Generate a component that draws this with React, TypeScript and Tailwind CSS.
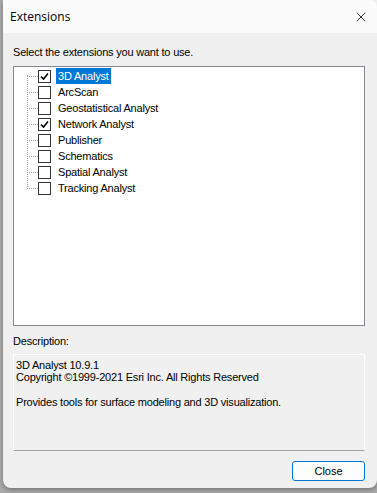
import { X } from "lucide-react"

const items = [
  { name: "3D Analyst", checked: true, selected: true },
  { name: "ArcScan", checked: false },
  { name: "Geostatistical Analyst", checked: false },
  { name: "Network Analyst", checked: true },
  { name: "Publisher", checked: false },
  { name: "Schematics", checked: false },
  { name: "Spatial Analyst", checked: false },
  { name: "Tracking Analyst", checked: false },
]

function CheckBox({ checked }: { checked: boolean }) {
  return (
    <div className="w-[13px] h-[13px] border border-[#333] bg-white flex items-center justify-center shrink-0">
      {checked && (
        <svg width="9" height="9" viewBox="0 0 9 9">
          <path d="M1 4.5 L3.5 7 L8 1.5" stroke="#000" strokeWidth="1.6" fill="none" />
        </svg>
      )}
    </div>
  )
}

export default function App() {
  return (
    <div className="w-[377px] h-[493px] bg-[#a9a9a9] pl-[3px] pb-[5px] overflow-hidden font-['Liberation_Sans',sans-serif] text-[11px] tracking-[-0.2px] text-black">
      <div className="w-[374px] h-[488px] bg-[#f0f0f0] rounded-br-[8px] rounded-bl-[8px] flex flex-col shadow-[0_2px_4px_rgba(0,0,0,0.3)]">
        {/* Title bar */}
        <div className="h-[33px] bg-[#fbfbfb] flex items-center justify-between pl-[7px] pr-[8px] rounded-tr-[8px] tracking-normal">
          <span className="font-['Open_Sans',sans-serif] text-[12px] text-black">Extensions</span>
          <X className="w-[16px] h-[16px]" strokeWidth={1.2} />
        </div>

        <div className="flex flex-col pl-[10px] pr-[12px] flex-1">
          <div className="mt-[13px] leading-[13px]">Select the extensions you want to use.</div>

          {/* List */}
          <div className="mt-[7px] h-[260px] bg-white border border-[#828790] relative pt-[1px]">
            <div className="absolute left-[13px] top-[8px] h-[114px] border-l border-dotted border-[#a0a0a0]" />
            {items.map((item) => (
              <div key={item.name} className="h-[16px] flex items-center relative">
                <div className="w-[11px] ml-[13px] border-t border-dotted border-[#a0a0a0]" />
                <CheckBox checked={item.checked} />
                <span
                  className={
                    "ml-[5px] px-[2px] leading-[16px] " +
                    (item.selected ? "bg-[#0078d7] text-white" : "")
                  }
                >
                  {item.name}
                </span>
              </div>
            ))}
          </div>

          <div className="mt-[9px] leading-[13px]">Description:</div>

          {/* Description */}
          <div className="mt-[6px] h-[97px] border border-white border-b-[#a0a0a0] px-[2px] pt-[4px] leading-[12px]">
            <div>3D Analyst 10.9.1</div>
            <div>Copyright ©1999-2021 Esri Inc. All Rights Reserved</div>
            <div className="mt-[13px]">Provides tools for surface modeling and 3D visualization.</div>
          </div>

          <div className="flex justify-end mt-[10px]">
            <button className="w-[73px] h-[20px] border border-[#0078d7] rounded-[3px] bg-[#fdfdfd] text-[11px] tracking-normal">
              Close
            </button>
          </div>
        </div>
      </div>
    </div>
  )
}
